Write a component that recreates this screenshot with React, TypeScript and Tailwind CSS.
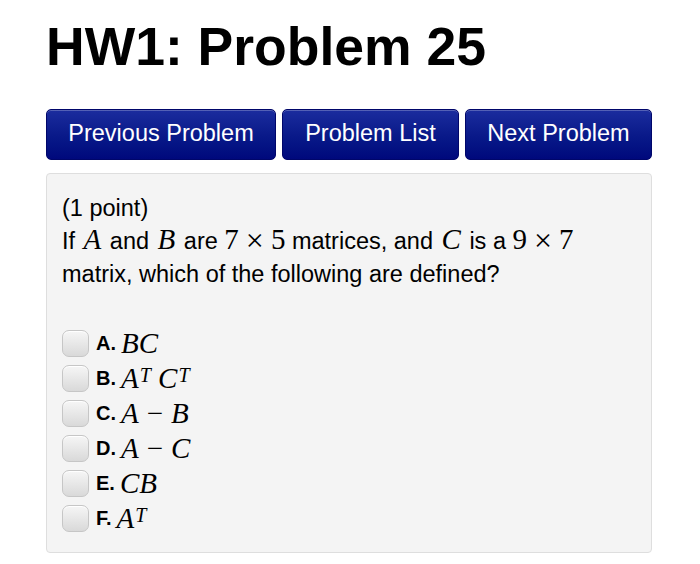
import React from "react";

const sans = { fontFamily: '"Liberation Sans", Arial, Helvetica, sans-serif' };
const serif = { fontFamily: '"Liberation Serif", "Times New Roman", serif' };

function M({ children, size = "text-[29px]", cls = "" }: { children: React.ReactNode; size?: string; cls?: string }) {
  return (
    <span className={`${size} italic ${cls}`} style={serif}>
      {children}
    </span>
  );
}

function R({ children, size = "text-[29px]", cls = "" }: { children: React.ReactNode; size?: string; cls?: string }) {
  return (
    <span className={`${size} ${cls}`} style={serif}>
      {children}
    </span>
  );
}

function Times({ a, b }: { a: string; b: string }) {
  return (
    <span className="text-[29px] leading-[20px]" style={serif}>
      {a}
      <span className="inline-block mx-[7px] text-[32px] leading-[20px] relative top-[2px]">×</span>
      {b}
    </span>
  );
}

function Sup({ children }: { children: React.ReactNode }) {
  return <sup className="text-[20px] relative -top-[6px] ml-[1px]">{children}</sup>;
}

function Checkbox() {
  return (
    <span className="inline-block w-[27px] h-[27px] rounded-[7px] border border-[#c6c6c6] bg-gradient-to-b from-[#f6f6f6] to-[#d9d9d9] shadow-[inset_0_1px_0_#ffffff] shrink-0" />
  );
}

function Btn({ label, w }: { label: string; w: string }) {
  return (
    <div
      className={`${w} h-[51px] flex items-center justify-center rounded-[5px] border border-[#00066a] bg-gradient-to-b from-[#1b2c9e] via-[#0a1a8a] to-[#00087c] text-white text-[23.5px] shadow-[inset_0_1px_0_rgba(255,255,255,0.25)]`}
    >
      {label}
    </div>
  );
}

function Opt({ letter, children }: { letter: string; children: React.ReactNode }) {
  return (
    <div className="flex items-center h-[35px]">
      <Checkbox />
      <span className="ml-[7px] font-bold text-[20px] mr-[5px]">{letter}</span>
      <span className="leading-none">{children}</span>
    </div>
  );
}

export default function App() {
  return (
    <div className="w-[700px] h-[564px] bg-white text-black px-[46px] pt-[20px]" style={sans}>
      <h1 className="text-[53.5px] font-bold leading-none">HW1: Problem 25</h1>
      <div className="flex gap-[6px] mt-[35px]">
        <Btn label="Previous Problem" w="w-[230px]" />
        <Btn label="Problem List" w="w-[177px]" />
        <Btn label="Next Problem" w="w-[187px]" />
      </div>
      <div className="mt-[13px] w-[606px] h-[380px] rounded-[4px] border border-[#dedede] bg-[#f4f4f4] pl-[15px] pt-[18px] text-[23.5px] leading-[33px]">
        <div className="h-[33px]">(1 point)</div>
        <div className="whitespace-nowrap h-[33px]">
          If <M cls="mx-[2px] leading-[20px]">A</M> and <M cls="mx-[2px] leading-[20px]">B</M> are <Times a="7" b="5" /> matrices, and{" "}
          <M cls="mx-[2px] leading-[20px]">C</M> is a <Times a="9" b="7" />
        </div>
        <div className="h-[33px]">matrix, which of the following are defined?</div>
        <div className="mt-[35px]">
          <Opt letter="A.">
            <M>BC</M>
          </Opt>
          <Opt letter="B.">
            <M>
              A<Sup>T</Sup> C<Sup>T</Sup>
            </M>
          </Opt>
          <Opt letter="C.">
            <M>A</M>
            <R cls="mx-[8px]">−</R>
            <M>B</M>
          </Opt>
          <Opt letter="D.">
            <M>A</M>
            <R cls="mx-[8px]">−</R>
            <M>C</M>
          </Opt>
          <Opt letter="E.">
            <M>CB</M>
          </Opt>
          <Opt letter="F.">
            <M>
              A<Sup>T</Sup>
            </M>
          </Opt>
        </div>
      </div>
    </div>
  );
}
